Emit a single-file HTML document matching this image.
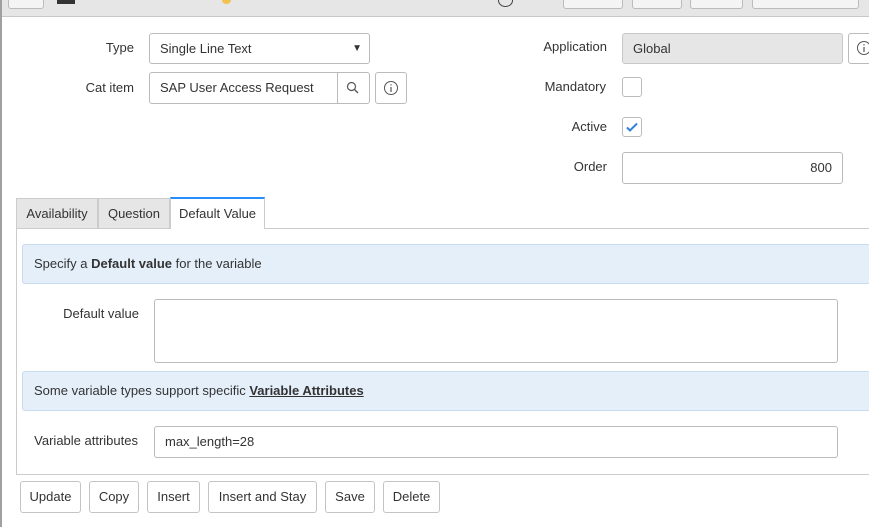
<!DOCTYPE html>
<html><head><style>
*{box-sizing:border-box;margin:0;padding:0}
body{width:869px;height:527px;overflow:hidden;background:#fff;font-family:"Liberation Sans",Arial,sans-serif;font-size:13px;color:#333;position:relative}
.a{position:absolute}
.lbl{position:absolute;text-align:right;line-height:16px}
.box{position:absolute;border:1px solid #bbb;border-radius:3px;background:#fff;line-height:29px;padding-left:10px}
.btn{position:absolute;border:1px solid #c4c4c4;border-radius:3px;background:#fff;text-align:center;line-height:30px;top:481px;height:32px}
.cb{position:absolute;left:622px;width:20px;height:20px;border:1px solid #bbb;border-radius:3px;background:#fff}
</style></head><body>
<div class="a" style="left:0;top:0;width:869px;height:17px;background:#e6e6e6;border-bottom:1px solid #c8c8c8"></div>
<div class="a" style="left:8px;top:-4px;width:36px;height:13px;border:1px solid #bbb;border-radius:3px;background:#f4f4f4"></div>
<div class="a" style="left:57px;top:0;width:18px;height:4px;background:#333"></div>
<div class="a" style="left:222px;top:-4px;width:9px;height:8px;border-radius:50%;background:#f2c14e"></div>
<div class="a" style="left:563px;top:-4px;width:60px;height:13px;border:1px solid #bbb;border-radius:3px;background:#f4f4f4"></div>
<div class="a" style="left:632px;top:-4px;width:50px;height:13px;border:1px solid #bbb;border-radius:3px;background:#f4f4f4"></div>
<div class="a" style="left:690px;top:-4px;width:53px;height:13px;border:1px solid #bbb;border-radius:3px;background:#f4f4f4"></div>
<div class="a" style="left:752px;top:-4px;width:107px;height:13px;border:1px solid #bbb;border-radius:3px;background:#f4f4f4"></div>
<div class="a" style="left:498px;top:-6px;width:15px;height:13px;border:1.5px solid #444;border-radius:50%"></div>
<div class="a" style="left:0;top:0;width:2px;height:527px;background:#a0a0a0"></div>

<div class="lbl" style="right:735px;top:40px">Type</div>
<div class="box" style="left:149px;top:33px;width:221px;height:31px">Single Line Text<span style="position:absolute;right:7px;top:0;font-size:10px">▼</span></div>
<div class="lbl" style="right:735px;top:80px">Cat item</div>
<div class="box" style="left:149px;top:72px;width:221px;height:32px">SAP User Access Request</div>
<div class="a" style="left:337px;top:72px;width:1px;height:32px;background:#bbb"></div>
<svg class="a" style="left:346px;top:81px" width="14" height="14" viewBox="0 0 14 14"><circle cx="5.5" cy="5.5" r="4" fill="none" stroke="#555" stroke-width="1.2"/><path d="M8.5 8.5L12 12" stroke="#555" stroke-width="1.3"/></svg>
<div class="box" style="left:375px;top:72px;width:32px;height:32px;padding:0"></div>
<svg class="a" style="left:383px;top:80px" width="16" height="16" viewBox="0 0 16 16"><circle cx="8" cy="8" r="6.5" fill="none" stroke="#555" stroke-width="1"/><path d="M8 7v5M8 4.3v1.2" stroke="#555" stroke-width="1.2"/></svg>

<div class="lbl" style="right:262px;top:39px">Application</div>
<div class="box" style="left:622px;top:33px;width:221px;height:31px;background:#e6e6e6;border-color:#c8c8c8">Global</div>
<div class="box" style="left:848px;top:33px;width:32px;height:31px;padding:0"></div>
<svg class="a" style="left:856px;top:40px" width="16" height="16" viewBox="0 0 16 16"><circle cx="8" cy="8" r="6.5" fill="none" stroke="#555" stroke-width="1"/><path d="M8 7v5M8 4.3v1.2" stroke="#555" stroke-width="1.2"/></svg>
<div class="lbl" style="right:263px;top:79px">Mandatory</div>
<div class="cb" style="top:77px"></div>
<div class="lbl" style="right:262px;top:119px">Active</div>
<div class="cb" style="top:117px"><svg width="18" height="18" viewBox="0 0 18 18"><path d="M4 9.5l3 3 7-7" fill="none" stroke="#2f7fd8" stroke-width="2"/></svg></div>
<div class="lbl" style="right:262px;top:159px">Order</div>
<div class="box" style="left:622px;top:152px;width:221px;height:32px;text-align:right;padding-right:10px">800</div>

<div class="a" style="left:16px;top:228px;width:853px;height:247px;border-left:1px solid #ccc;border-top:1px solid #ccc;border-bottom:1px solid #ccc"></div>
<div class="a" style="left:16px;top:198px;width:82px;height:31px;background:#e6e6e6;border:1px solid #ccc;line-height:30px;text-align:center">Availability</div>
<div class="a" style="left:98px;top:198px;width:72px;height:31px;background:#e6e6e6;border:1px solid #ccc;border-left:1px solid #ccc;line-height:30px;text-align:center">Question</div>
<div class="a" style="left:170px;top:197px;width:95px;height:32px;background:#fff;border:1px solid #ccc;border-top:2px solid #278efc;border-bottom:none;line-height:30px;text-align:center">Default Value</div>

<div class="a" style="left:22px;top:244px;width:850px;height:40px;background:#e5effa;border:1px solid #c9dbee;border-radius:3px;line-height:38px;padding-left:11px">Specify a <b>Default value</b> for the variable</div>
<div class="lbl" style="right:730px;top:306px">Default value</div>
<div class="box" style="left:154px;top:299px;width:684px;height:64px"></div>
<div class="a" style="left:22px;top:371px;width:850px;height:40px;background:#e5effa;border:1px solid #c9dbee;border-radius:3px;line-height:38px;padding-left:11px">Some variable types support specific <b style="text-decoration:underline">Variable Attributes</b></div>
<div class="lbl" style="right:731px;top:433px">Variable attributes</div>
<div class="box" style="left:154px;top:426px;width:684px;height:32px">max_length=28</div>

<div class="btn" style="left:20px;width:61px">Update</div>
<div class="btn" style="left:89px;width:50px">Copy</div>
<div class="btn" style="left:147px;width:53px">Insert</div>
<div class="btn" style="left:208px;width:109px">Insert and Stay</div>
<div class="btn" style="left:325px;width:50px">Save</div>
<div class="btn" style="left:383px;width:57px">Delete</div>
</body></html>
